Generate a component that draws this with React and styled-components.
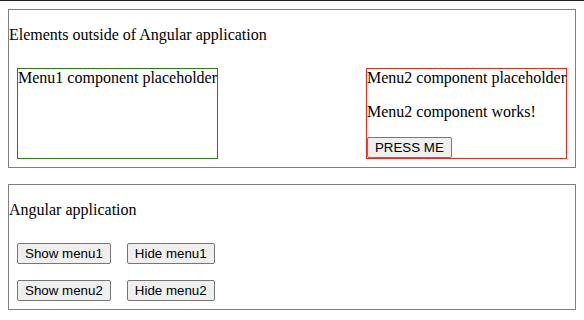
import React from "react";
import styled, { createGlobalStyle } from "styled-components";

const Global = createGlobalStyle`
  html { border-top: 1px solid #202020; background: #fff; }
  body {
    margin: 8px;
    font-family: "Liberation Serif", "Times New Roman", serif;
    font-size: 16px;
    color: #000;
  }
`;

const Section = styled.div`
  border: 1px solid #808080;
  margin-bottom: ${(p) => (p.$gap ? "16px" : "0")};
`;

const Para = styled.p`
  margin: 16px 0;
`;

const MenuRow = styled.div`
  display: flex;
  justify-content: space-between;
  align-items: stretch;
`;

const MenuBox = styled.div`
  margin: 8px;
  border: 1px solid ${(p) => p.$color};
`;

const ButtonRow = styled.div`
  display: flex;
`;

const Btn = styled.button`
  margin: ${(p) => (p.$inline ? "0" : "8px")};
  font-family: "Liberation Sans", Arial, sans-serif;
  font-size: 13.333px;
  line-height: normal;
  padding: 2px 7px;
  border: 1px solid #767676;
  border-radius: 2px;
  background: #efefef;
  color: #000;
  vertical-align: baseline;
`;

export default function App() {
  return (
    <>
      <Global />
      <Section $gap>
        <Para>Elements outside of Angular application</Para>
        <MenuRow>
          <MenuBox $color="#2f7d17">Menu1 component placeholder</MenuBox>
          <MenuBox $color="#ee2a1a">
            Menu2 component placeholder
            <div>
              <Para>Menu2 component works!</Para>
              <Btn $inline>PRESS ME</Btn>
            </div>
          </MenuBox>
        </MenuRow>
      </Section>
      <Section>
        <Para>Angular application</Para>
        <ButtonRow>
          <Btn>Show menu1</Btn>
          <Btn>Hide menu1</Btn>
        </ButtonRow>
        <ButtonRow>
          <Btn>Show menu2</Btn>
          <Btn>Hide menu2</Btn>
        </ButtonRow>
      </Section>
    </>
  );
}
